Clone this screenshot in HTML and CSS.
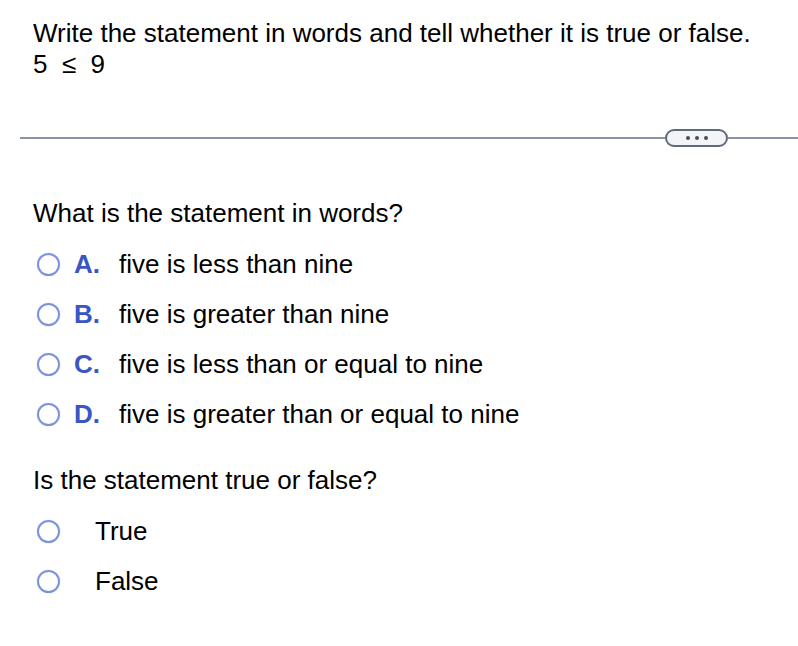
FILE: index.html
```html
<!DOCTYPE html>
<html>
<head>
<meta charset="utf-8">
<link rel="stylesheet" href="styles.css">
</head>
<body>
<div class="page">
  <div class="question">
    <p class="line">Write the statement in words and tell whether it is true or false.</p>
    <p class="line">5 &nbsp;≤ &nbsp;9</p>
  </div>
  <div class="divider">
    <div class="rule"></div>
    <div class="pill"><span class="dot"></span><span class="dot"></span><span class="dot"></span></div>
    <div class="rule tail"></div>
  </div>
  <div class="part">
    <p class="prompt">What is the statement in words?</p>
    <div class="options">
      <div class="opt"><span class="radio"></span><span class="letter">A.</span><span class="text">five is less than nine</span></div>
      <div class="opt"><span class="radio"></span><span class="letter">B.</span><span class="text">five is greater than nine</span></div>
      <div class="opt"><span class="radio"></span><span class="letter">C.</span><span class="text">five is less than or equal to nine</span></div>
      <div class="opt"><span class="radio"></span><span class="letter">D.</span><span class="text">five is greater than or equal to nine</span></div>
    </div>
  </div>
  <div class="part second">
    <p class="prompt">Is the statement true or false?</p>
    <div class="options">
      <div class="opt"><span class="radio"></span><span class="plain">True</span></div>
      <div class="opt"><span class="radio"></span><span class="plain">False</span></div>
    </div>
  </div>
</div>
</body>
</html>
```
FILE: styles.css
```css
html, body {
  margin: 0;
  padding: 0;
  background: #fff;
}
body {
  font-family: "Liberation Sans", Arial, sans-serif;
  font-size: 26px;
  color: #000;
}
.page {
  padding: 18px 0 0 20px;
}
.question {
  padding-left: 13px;
}
.line {
  margin: 0;
  line-height: 31px;
}
.divider {
  display: flex;
  align-items: center;
  margin-top: 49px;
  height: 18px;
}
.rule {
  height: 2px;
  background: #8a93a5;
  width: 645px;
}
.rule.tail {
  flex: 1;
  width: auto;
}
.pill {
  width: 59px;
  height: 14px;
  border: 2px solid #5f6b7d;
  border-radius: 9px;
  background: #f3f4f6;
  display: flex;
  align-items: center;
  justify-content: center;
  gap: 5px;
}
.dot {
  width: 4px;
  height: 4px;
  border-radius: 50%;
  background: #4a4f57;
}
.part {
  margin-top: 51px;
  padding-left: 13px;
}
.part.second {
  margin-top: 26px;
}
.prompt {
  margin: 0;
  line-height: 30px;
}
.options {
  display: flex;
  flex-direction: column;
  margin-top: 11px;
  margin-left: 4px;
}
.opt {
  display: flex;
  align-items: center;
  height: 50px;
}
.radio {
  border: 2px solid #7c93dc;
  border-radius: 50%;
  box-sizing: content-box;
  box-shadow: 0 0 1px #a9b8ec;
  flex: none;
  width: 19px;
  height: 19px;
}
.letter {
  font-weight: bold;
  color: #3a55c4;
  margin-left: 14px;
  width: 45px;
}
.plain {
  margin-left: 35px;
}
```
